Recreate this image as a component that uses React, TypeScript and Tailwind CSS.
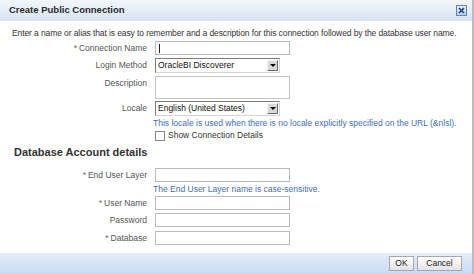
import { useState } from "react";

const font = { fontFamily: '"Liberation Sans", Arial, sans-serif' };

function Label({ text, req }: { text: string; req?: boolean }) {
  return (
    <div className="w-[147px] shrink-0 text-right text-[8.5px] text-[#555]">
      {req && <span className="mr-[2px] text-[#666]">*</span>}
      {text}
    </div>
  );
}

function TextInput({ caret }: { caret?: boolean }) {
  return (
    <div className="ml-[8px] flex h-[14px] w-[135px] items-center border border-[#b9b9b9] bg-white px-[3px]">
      {caret && <span className="h-[9px] w-px bg-[#222]" />}
    </div>
  );
}

function Select({ value }: { value: string }) {
  return (
    <div className="ml-[8px] flex h-[15px] w-[125px] items-center border border-t-[#7a7a7a] border-l-[#7a7a7a] border-b-[#d4d4d4] border-r-[#d4d4d4] bg-white">
      <span className="flex-1 pl-[2px] text-[8.5px] leading-none text-[#111]">{value}</span>
      <span className="mr-px flex h-[11px] w-[11px] items-center justify-center border border-t-[#f5f5f5] border-l-[#f5f5f5] border-b-[#6a6a6a] border-r-[#6a6a6a] bg-[#d8d8d8]">
        <span className="h-0 w-0 border-x-[3px] border-t-[3px] border-x-transparent border-t-black" />
      </span>
    </div>
  );
}

export default function App() {
  const [checked, setChecked] = useState(false);

  return (
    <div
      className="flex h-[274px] w-[474px] flex-col overflow-hidden border-r-[2px] border-r-[#b8bcc2] bg-white"
      style={font}
    >
      <header className="flex h-[21px] shrink-0 items-center justify-between bg-gradient-to-b from-[#f3f7fc] to-[#d6e3f3] pl-[9px] pr-[5px]">
        <h1 className="text-[9.5px] font-bold text-[#2a2a2a]">Create Public Connection</h1>
        <button className="flex h-[11px] w-[11px] items-center justify-center border border-[#5f86bd] bg-gradient-to-b from-[#e6effa] to-[#b8cde9]">
          <svg width="7" height="7" viewBox="0 0 7 7">
            <path d="M1 1 L6 6 M6 1 L1 6" stroke="#1f3f78" strokeWidth="1.6" />
          </svg>
        </button>
      </header>

      <div className="flex flex-1 flex-col pt-[7px]">
        <p className="pl-[12px] text-[8.5px] leading-[11px] tracking-[-0.1px] text-[#333]">
          Enter a name or alias that is easy to remember and a description for this connection followed by the database user name.
        </p>

        <div className="mt-[2px] flex items-center">
          <Label text="Connection Name" req />
          <TextInput caret />
        </div>
        <div className="mt-[3px] flex items-center">
          <Label text="Login Method" />
          <Select value="OracleBI Discoverer" />
        </div>
        <div className="mt-[3px] flex items-start">
          <div className="pt-[1px]">
            <Label text="Description" />
          </div>
          <div className="ml-[8px] h-[23px] w-[135px] border border-[#c4c4c4] bg-white" />
        </div>
        <div className="mt-[2px] flex items-center">
          <Label text="Locale" />
          <Select value="English (United States)" />
        </div>
        <p className="ml-[153px] mt-[2px] text-[8.5px] leading-[11px] text-[#3d6fc0]">
          This locale is used when there is no locale explicitly specified on the URL (&amp;nlsl).
        </p>
        <label className="ml-[155px] mt-[1px] flex items-center gap-[3px] text-[8.5px] leading-[11px] text-[#333]">
          <input
            type="checkbox"
            checked={checked}
            onChange={(e) => setChecked(e.target.checked)}
            className="h-[10px] w-[10px] appearance-none border border-[#8a8a8a] bg-white"
          />
          Show Connection Details
        </label>

        <h2 className="mt-[4px] pl-[14px] text-[11px] font-bold leading-[14px] text-[#333]">
          Database Account details
        </h2>

        <div className="mt-[9px] flex items-center">
          <Label text="End User Layer" req />
          <TextInput />
        </div>
        <p className="ml-[153px] mt-[2px] text-[8.5px] leading-[11px] text-[#3d6fc0]">
          The End User Layer name is case-sensitive.
        </p>
        <div className="mt-[1px] flex items-center">
          <Label text="User Name" req />
          <TextInput />
        </div>
        <div className="mt-[3px] flex items-center">
          <Label text="Password" />
          <TextInput />
        </div>
        <div className="mt-[4px] flex items-center">
          <Label text="Database" req />
          <TextInput />
        </div>
      </div>

      <footer className="flex h-[21px] shrink-0 items-center justify-end gap-[3px] bg-gradient-to-b from-[#e4edf9] to-[#c9dbf1] pr-[10px]">
        <button className="h-[15px] w-[25px] border border-[#a8a8a8] bg-gradient-to-b from-white to-[#e3e3e3] text-[8.5px] leading-none text-[#222]">
          OK
        </button>
        <button className="h-[15px] w-[45px] border border-[#a8a8a8] bg-gradient-to-b from-white to-[#e3e3e3] text-[8.5px] leading-none text-[#222]">
          Cancel
        </button>
      </footer>
    </div>
  );
}
